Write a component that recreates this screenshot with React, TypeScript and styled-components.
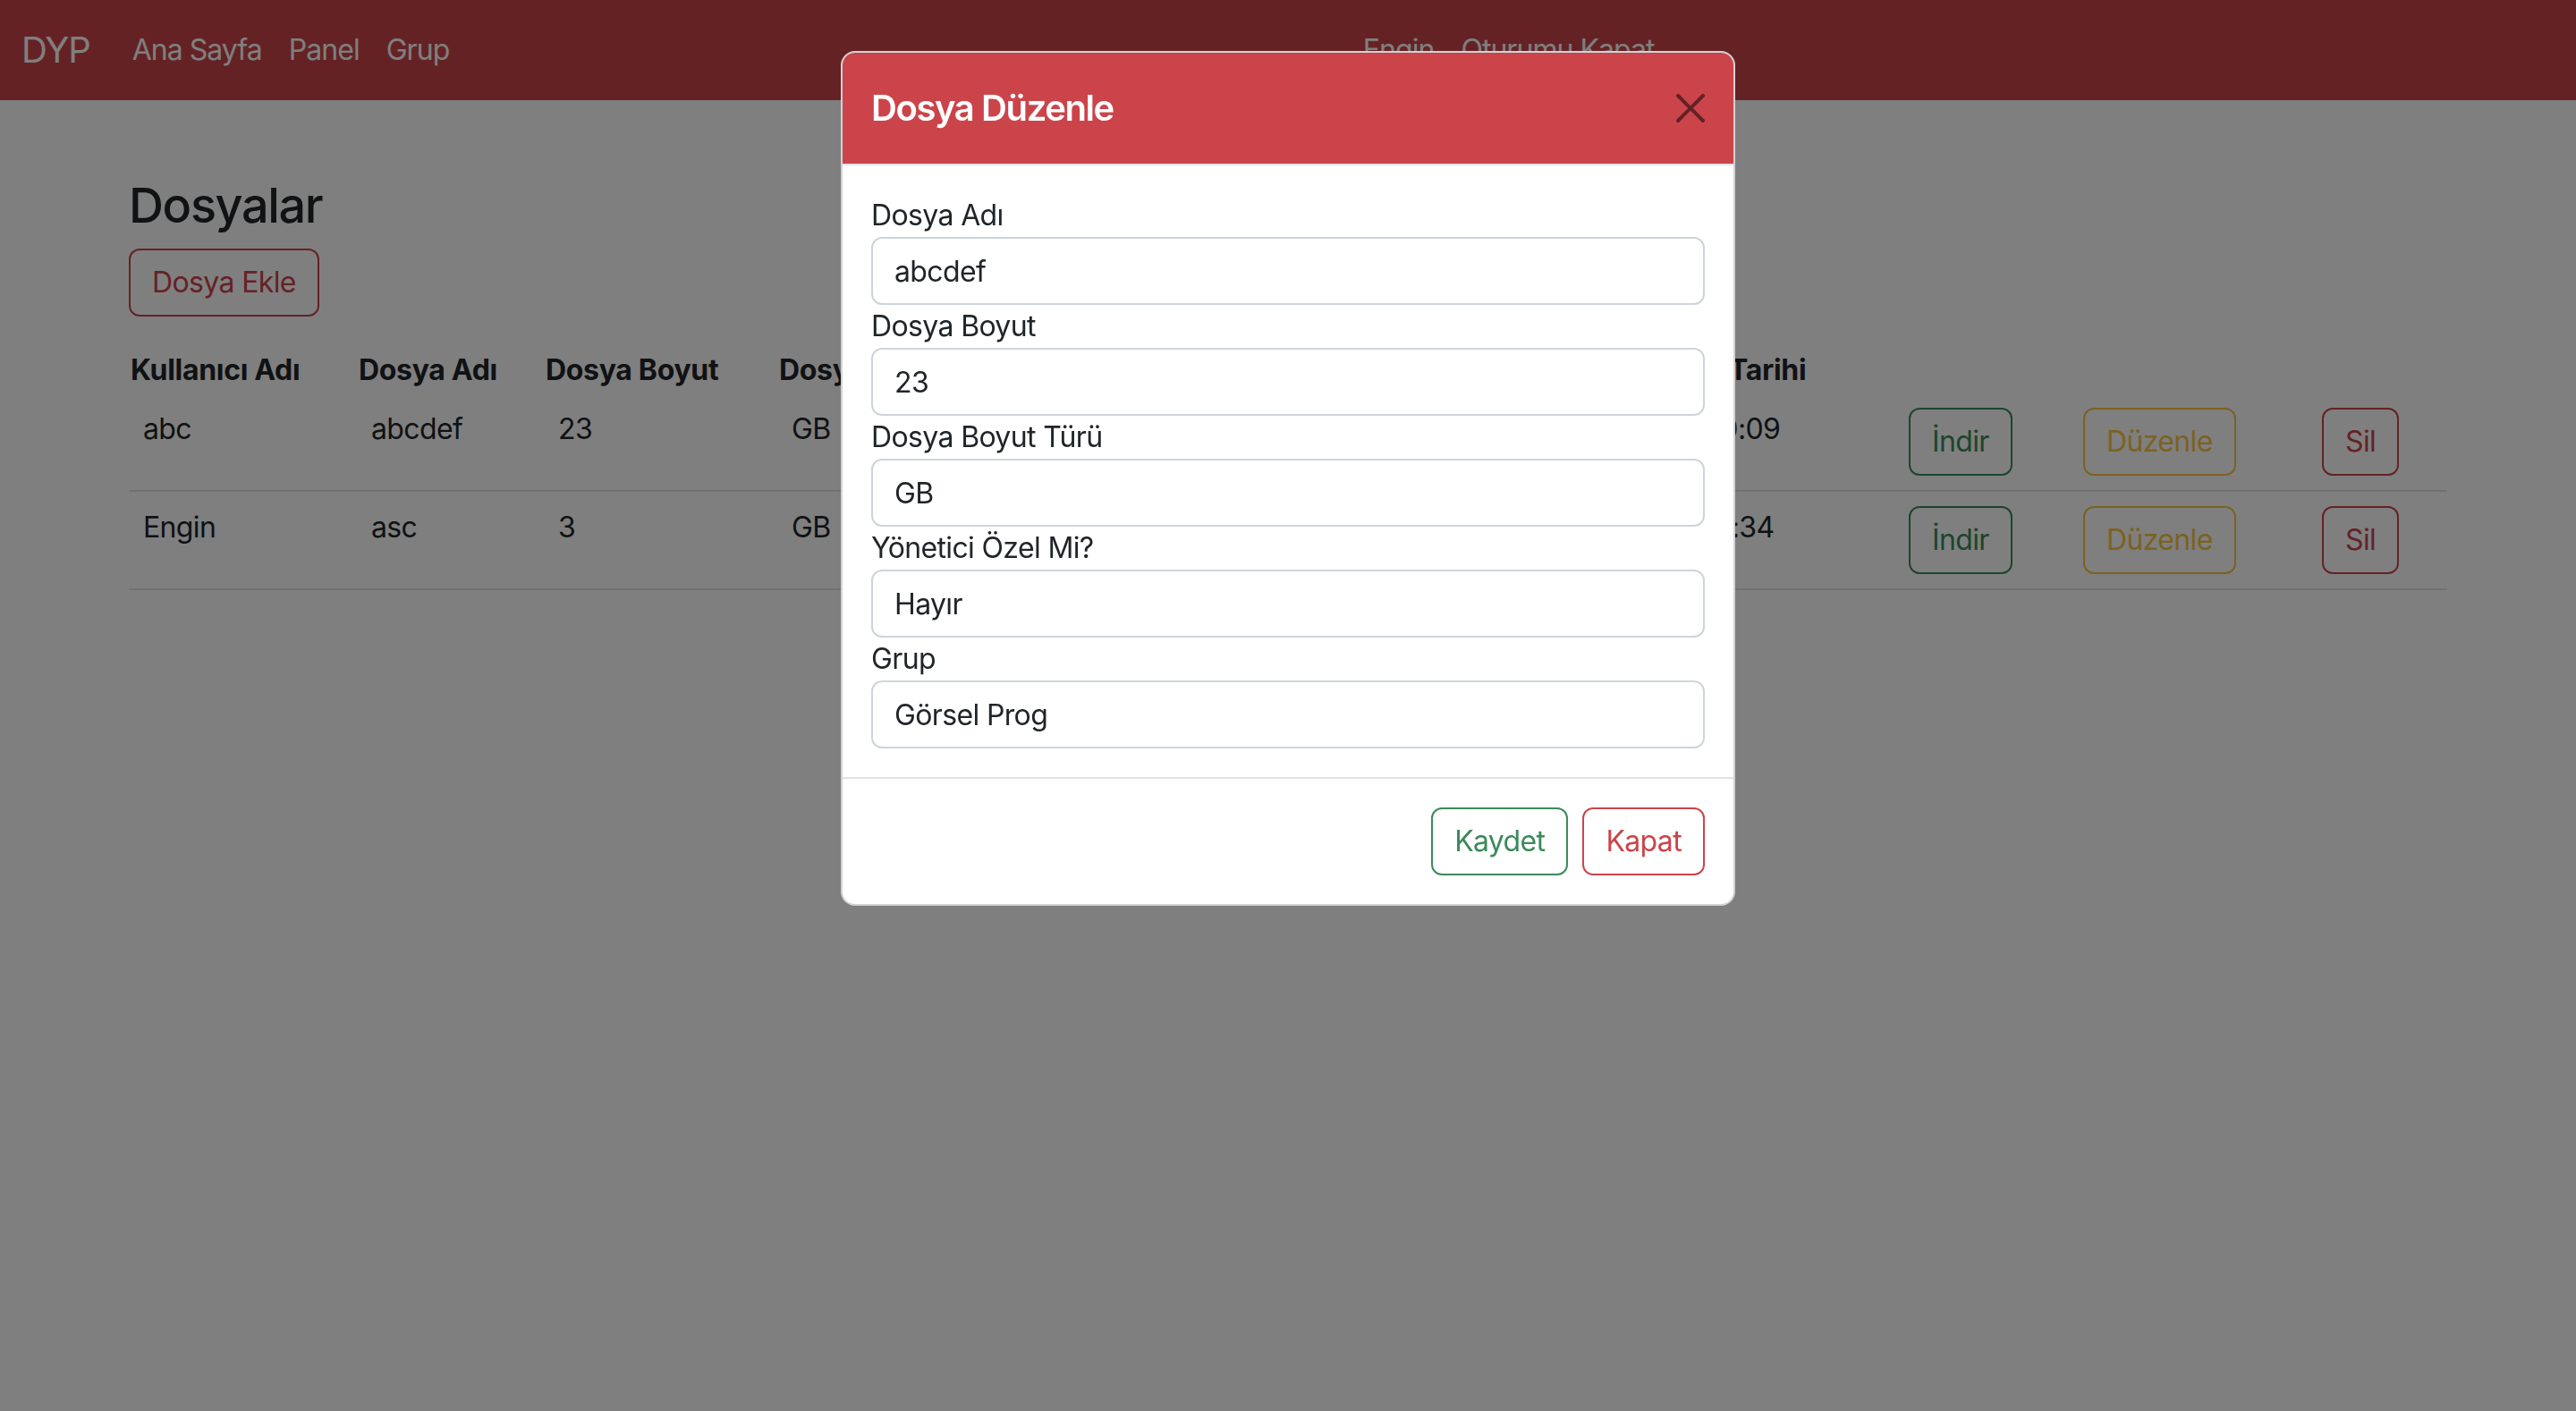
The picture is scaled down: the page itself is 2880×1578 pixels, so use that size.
import React from "react";
import styled, { createGlobalStyle } from "styled-components";

// colours as they come out in the reference screenshot
const DANGER = "#cb444a";
const SUCCESS = "#3b8a5a";
const WARNING = "#f7c53f";

const GlobalStyle = createGlobalStyle`
  * {
    box-sizing: border-box;
  }
  html, body {
    margin: 0;
    background: #fff;
  }
  body {
    font-family: Inter, "Noto Sans", "Liberation Sans", sans-serif;
    font-size: 32px;
    line-height: 1.5;
    letter-spacing: -0.02em;
    color: #212529;
  }
`;

const Navbar = styled.nav`
  display: flex;
  align-items: center;
  height: 112px;
  padding: 0 24px;
  background-color: ${DANGER};
`;

const Brand = styled.a`
  font-size: 40px;
  line-height: 1.5;
  letter-spacing: -0.03em;
  padding: 10px 0;
  margin-right: 32px;
  color: #fff;
  text-decoration: none;
`;

const NavList = styled.ul<{ $grow?: boolean }>`
  display: flex;
  list-style: none;
  margin: 0;
  padding: 0;
  flex: ${(p) => (p.$grow ? "1" : "0 0 auto")};
  justify-content: ${(p) => (p.$grow ? "center" : "flex-start")};
`;

const NavLink = styled.a`
  display: block;
  padding: 16px 15px;
  letter-spacing: -0.03em;
  color: #fff;
  text-decoration: none;
`;

const Container = styled.main`
  max-width: 2640px;
  margin: 0 auto;
  padding: 86px 24px 0;
`;

const Title = styled.h2`
  font-size: 54px;
  font-weight: 500;
  line-height: 1.2;
  letter-spacing: -0.025em;
  margin: 0 0 15px;
`;

const OutlineButton = styled.button<{ $color: string }>`
  display: inline-block;
  font-family: inherit;
  font-size: 32px;
  line-height: 48px;
  letter-spacing: -0.02em;
  padding: 12px 24px;
  border: 2px solid ${(p) => p.$color};
  border-radius: 12px;
  background: transparent;
  color: ${(p) => p.$color};
  cursor: pointer;
`;

const AddRow = styled.div`
  margin-bottom: 34px;
`;

const Table = styled.table`
  width: 100%;
  table-layout: fixed;
  border-collapse: collapse;
`;

const Th = styled.th`
  padding: 2px;
  text-align: left;
  font-weight: 700;
  letter-spacing: -0.01em;
  white-space: nowrap;
  overflow: hidden;
`;

const Tr = styled.tr`
  border-bottom: 2px solid #dee2e6;
`;

const Td = styled.td`
  padding: 16px;
  vertical-align: top;
  white-space: nowrap;
`;

const Backdrop = styled.div`
  position: fixed;
  inset: 0;
  background: rgba(0, 0, 0, 0.5);
`;

const Dialog = styled.div`
  position: fixed;
  top: 57px;
  left: 50%;
  width: 1000px;
  margin-left: -500px;
  background: #fff;
  border: 2px solid rgba(0, 0, 0, 0.175);
  border-radius: 16px;
  overflow: hidden;
`;

const ModalHeader = styled.div`
  display: flex;
  align-items: center;
  justify-content: space-between;
  padding: 32px 24px 32px 32px;
  background: ${DANGER};
  border-bottom: 2px solid #dee2e6;
`;

const ModalTitle = styled.h5`
  margin: 0;
  font-size: 40px;
  line-height: 1.5;
  font-weight: 600;
  letter-spacing: -0.035em;
  color: #fff;
`;

const CloseButton = styled.button`
  width: 48px;
  height: 48px;
  padding: 8px;
  border: 0;
  background: transparent;
  display: flex;
  align-items: center;
  justify-content: center;
  opacity: 0.5;
  cursor: pointer;
`;

const ModalBody = styled.div`
  padding: 32px;
`;

const Label = styled.label`
  display: block;
`;

const Input = styled.input`
  display: block;
  width: 100%;
  height: 76px;
  padding: 12px 24px;
  font-family: inherit;
  font-size: 32px;
  line-height: 48px;
  letter-spacing: -0.02em;
  color: #212529;
  border: 2px solid #ced4da;
  border-radius: 12px;
  background: #fff;
`;

const ModalFooter = styled.div`
  display: flex;
  justify-content: flex-end;
  gap: 16px;
  padding: 32px;
  border-top: 2px solid #dee2e6;
`;

type Row = {
  user: string;
  name: string;
  size: string;
  unit: string;
  admin: string;
  group: string;
  date: string;
};

const rows: Row[] = [
  { user: "abc", name: "abcdef", size: "23", unit: "GB", admin: "Hayır", group: "Görsel Prog", date: "2023-12-20 14:50:09" },
  { user: "Engin", name: "asc", size: "3", unit: "GB", admin: "Hayır", group: "Görsel Prog", date: "2023-12-20 15:14:34" },
];

const fields = [
  { label: "Dosya Adı", value: "abcdef" },
  { label: "Dosya Boyut", value: "23" },
  { label: "Dosya Boyut Türü", value: "GB" },
  { label: "Yönetici Özel Mi?", value: "Hayır" },
  { label: "Grup", value: "Görsel Prog" },
];

export default function App() {
  return (
    <>
      <GlobalStyle />
      <Navbar>
        <Brand href="#">DYP</Brand>
        <NavList>
          <li><NavLink href="#">Ana Sayfa</NavLink></li>
          <li><NavLink href="#">Panel</NavLink></li>
          <li><NavLink href="#">Grup</NavLink></li>
        </NavList>
        <NavList $grow>
          <li><NavLink href="#">Engin</NavLink></li>
          <li><NavLink href="#">Oturumu Kapat</NavLink></li>
        </NavList>
      </Navbar>

      <Container>
        <Title>Dosyalar</Title>
        <AddRow>
          <OutlineButton $color={DANGER}>Dosya Ekle</OutlineButton>
        </AddRow>
        <Table>
          <colgroup>
            <col style={{ width: 255 }} />
            <col style={{ width: 209 }} />
            <col style={{ width: 261 }} />
            <col style={{ width: 300 }} />
            <col style={{ width: 260 }} />
            <col style={{ width: 237 }} />
            <col style={{ width: 452 }} />
            <col style={{ width: 195 }} />
            <col style={{ width: 267 }} />
            <col style={{ width: 156 }} />
          </colgroup>
          <thead>
            <tr>
              <Th>Kullanıcı Adı</Th>
              <Th>Dosya Adı</Th>
              <Th>Dosya Boyut</Th>
              <Th>Dosya Boyut Türü</Th>
              <Th>Yönetici Özel Mi?</Th>
              <Th>Grup</Th>
              <Th>Dosya Yüklenme Tarihi</Th>
              <Th />
              <Th />
              <Th />
            </tr>
          </thead>
          <tbody>
            {rows.map((r) => (
              <Tr key={r.user}>
                <Td>{r.user}</Td>
                <Td>{r.name}</Td>
                <Td>{r.size}</Td>
                <Td>{r.unit}</Td>
                <Td>{r.admin}</Td>
                <Td>{r.group}</Td>
                <Td>{r.date}</Td>
                <Td><OutlineButton $color={SUCCESS}>İndir</OutlineButton></Td>
                <Td><OutlineButton $color={WARNING}>Düzenle</OutlineButton></Td>
                <Td><OutlineButton $color={DANGER}>Sil</OutlineButton></Td>
              </Tr>
            ))}
          </tbody>
        </Table>
      </Container>

      <Backdrop />
      <Dialog>
        <ModalHeader>
          <ModalTitle>Dosya Düzenle</ModalTitle>
          <CloseButton aria-label="Kapat">
            <svg width="32" height="32" viewBox="0 0 16 16" fill="#000">
              <path d="M.293.293a1 1 0 0 1 1.414 0L8 6.586 14.293.293a1 1 0 1 1 1.414 1.414L9.414 8l6.293 6.293a1 1 0 0 1-1.414 1.414L8 9.414l-6.293 6.293a1 1 0 0 1-1.414-1.414L6.586 8 .293 1.707a1 1 0 0 1 0-1.414z" />
            </svg>
          </CloseButton>
        </ModalHeader>
        <ModalBody>
          {fields.map((f) => (
            <div key={f.label}>
              <Label>{f.label}</Label>
              <Input defaultValue={f.value} />
            </div>
          ))}
        </ModalBody>
        <ModalFooter>
          <OutlineButton $color={SUCCESS}>Kaydet</OutlineButton>
          <OutlineButton $color={DANGER}>Kapat</OutlineButton>
        </ModalFooter>
      </Dialog>
    </>
  );
}
